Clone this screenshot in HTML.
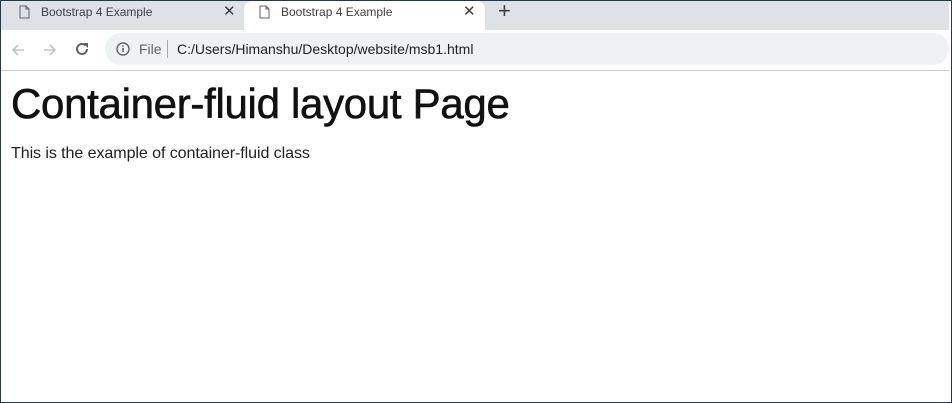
<!DOCTYPE html>
<html><head><style>
body{margin:0;width:952px;height:403px;overflow:hidden;font-family:"Liberation Sans",sans-serif;background:#fff;position:relative}
.frame{position:absolute;left:0;top:0;width:950px;height:401px;border:1px solid #1f3c48;border-right:2px solid #1f3c48;box-sizing:content-box}
.tabs{position:absolute;left:1px;top:1px;width:948px;height:29px;background:#dee1e6}
.tab{position:absolute;top:0;height:29px;font-size:12px;color:#3c4043;line-height:22px}
.t2{left:243px;width:241px;background:#fff;border-radius:8px 8px 0 0}
.tool{position:absolute;left:1px;top:30px;width:948px;height:40px;background:#fff;border-bottom:1px solid #ccc}
.omni{position:absolute;left:104px;top:3px;width:844px;height:32px;background:#eff2f3;border-radius:16px;font-size:14px;line-height:32px;color:#202124}
h1{position:absolute;left:11px;top:80px;margin:0;font-weight:normal;font-size:42px;color:#111;letter-spacing:-0.3px;transform:scaleX(1.0);transform-origin:left;-webkit-text-stroke:0.6px #111;white-space:nowrap}
p{position:absolute;left:11px;top:144px;margin:0;font-size:16.1px;color:#222;letter-spacing:-0.1px;white-space:nowrap}
</style></head><body>
<div class="frame"></div>
<div class="tabs">
 <div class="tab" style="left:0;width:243px">
  <svg style="position:absolute;left:18px;top:4px" width="11" height="14" viewBox="0 0 11 14"><path d="M1 1h6l3 3v9H1z M7 1v3h3" fill="none" stroke="#5f6368"/></svg>
  <span style="position:absolute;left:40px;top:0">Bootstrap 4 Example</span>
  <span style="position:absolute;left:222px;top:0;font-size:15px">✕</span>
 </div>
 <div class="tab t2">
  <svg style="position:absolute;left:15px;top:4px" width="11" height="14" viewBox="0 0 11 14"><path d="M1 1h6l3 3v9H1z M7 1v3h3" fill="none" stroke="#5f6368"/></svg>
  <span style="position:absolute;left:37px;top:0">Bootstrap 4 Example</span>
  <span style="position:absolute;left:219px;top:0;font-size:15px">✕</span>
 </div>
 <span style="position:absolute;left:497px;top:-3px;font-size:22px;color:#3c4043">+</span>
</div>
<div class="tool">
 <svg style="position:absolute;left:9px;top:12px" width="16" height="16" viewBox="0 0 16 16"><path d="M14 8H3M8 3L3 8l5 5" fill="none" stroke="#c0c3c6" stroke-width="1.6"/></svg>
 <svg style="position:absolute;left:41px;top:12px" width="16" height="16" viewBox="0 0 16 16"><path d="M2 8h11M8 3l5 5-5 5" fill="none" stroke="#c0c3c6" stroke-width="1.6"/></svg>
 <svg style="position:absolute;left:73px;top:11px" width="16" height="16" viewBox="0 0 16 16"><path d="M13 8a5 5 0 1 1-1.5-3.6" fill="none" stroke="#5f6368" stroke-width="2"/><path d="M9 2h5v5z" fill="#5f6368"/></svg>
 <div class="omni">
  <svg style="position:absolute;left:11px;top:9px" width="14" height="14" viewBox="0 0 14 14"><circle cx="7" cy="7" r="6" fill="none" stroke="#5f6368" stroke-width="1.4"/><path d="M7 6v4M7 3.5v1.3" stroke="#5f6368" stroke-width="1.6"/></svg>
  <span style="position:absolute;left:34px;color:#5f6368">File</span>
  <span style="position:absolute;left:62px;top:7px;width:1px;height:18px;background:#aaa"></span>
  <span style="position:absolute;left:72px">C:/Users/Himanshu/Desktop/website/msb1.html</span>
 </div>
</div>
<h1>Container-fluid layout Page</h1>
<p>This is the example of container-fluid class</p>
</body></html>
